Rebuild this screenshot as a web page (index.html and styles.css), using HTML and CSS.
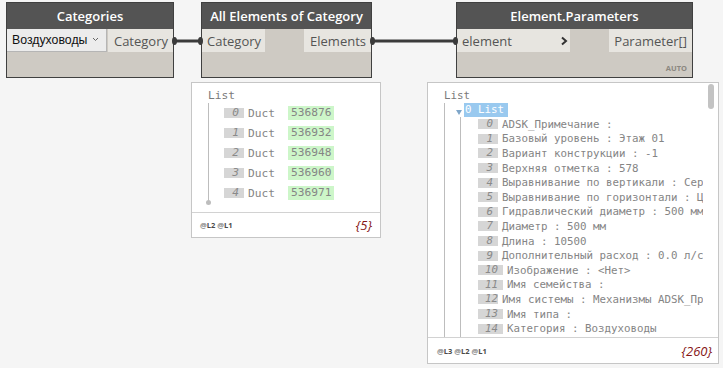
FILE: index.html
```html
<!DOCTYPE html>
<html lang="ru">
<head>
  <meta charset="UTF-8" />
  <title>Dynamo – Element.Parameters</title>
  <link rel="stylesheet" href="styles.css">
</head>
<body>
  <div class="canvas">

    <!-- Categories -->
    <div class="node node-categories">
      <div class="node-header">Categories</div>
      <div class="node-ports">
        <div class="dropdown">
          <span>Воздуховоды</span>
          <svg class="dropdown-arrow" width="7" height="5" viewBox="0 0 7 5"><polyline points="1,1 3.5,3.5 6,1" fill="none" stroke="#666" stroke-width="1"/></svg>
        </div>
        <div class="port port-out port-cat-out">Category</div>
      </div>
      <div class="node-body"></div>
    </div>

    <!-- All Elements of Category -->
    <div class="node node-elements">
      <div class="node-header">All Elements of Category</div>
      <div class="node-ports">
        <div class="port port-in port-cat-in">Category</div>
        <div class="port port-out port-el-out">Elements</div>
      </div>
      <div class="node-body"></div>
    </div>

    <!-- Element.Parameters -->
    <div class="node node-params">
      <div class="node-header">Element.Parameters</div>
      <div class="node-ports">
        <div class="port port-in port-el-in">
          <span>element</span>
          <svg class="lacing" width="8" height="10" viewBox="0 0 8 10"><polyline points="2,1.5 6,5 2,8.5" fill="none" stroke="#333" stroke-width="2"/></svg>
        </div>
        <div class="port port-out port-par-out">Parameter[]</div>
      </div>
      <div class="node-body node-body-auto"><span class="auto">AUTO</span></div>
    </div>

    <!-- wires -->
    <svg class="wires" width="723" height="368" viewBox="0 0 723 368">
      <line x1="174" y1="41" x2="200" y2="41" stroke="#3b3b3b" stroke-width="3"/>
      <line x1="372" y1="41" x2="455" y2="41" stroke="#3b3b3b" stroke-width="3"/>
      <ellipse cx="174.5" cy="41" rx="2.5" ry="4" fill="#3b3b3b"/>
      <ellipse cx="200.5" cy="41" rx="2.5" ry="4" fill="#3b3b3b"/>
      <ellipse cx="372.5" cy="41" rx="2.5" ry="4" fill="#3b3b3b"/>
      <ellipse cx="455.5" cy="41" rx="2.5" ry="4" fill="#3b3b3b"/>
    </svg>

    <!-- preview of All Elements of Category -->
    <div class="preview preview-elements">
      <div class="preview-body">
        <div class="list-label">List</div>
        <div class="list-level list-level-dot">
          <div class="item item-tall"><span class="idx">0</span><span>Duct</span><span class="elem-id">536876</span></div>
          <div class="item item-tall"><span class="idx">1</span><span>Duct</span><span class="elem-id">536932</span></div>
          <div class="item item-tall"><span class="idx">2</span><span>Duct</span><span class="elem-id">536948</span></div>
          <div class="item item-tall"><span class="idx">3</span><span>Duct</span><span class="elem-id">536960</span></div>
          <div class="item item-tall"><span class="idx">4</span><span>Duct</span><span class="elem-id">536971</span></div>
        </div>
      </div>
      <div class="preview-footer footer-elements">
        <span class="levels"><b>@</b>L2 <b>@</b>L1</span>
        <span class="count">{5}</span>
      </div>
    </div>

    <!-- preview of Element.Parameters -->
    <div class="preview preview-params">
      <div class="preview-row">
        <div class="preview-body">
          <div class="list-label">List</div>
          <div class="list-level">
            <div class="sublist-head">
              <span class="caret"></span>
              <span class="sublist-name">0 List</span>
            </div>
            <div class="list-level sub-level">
              <div class="item"><span class="idx">0</span><span>ADSK_Примечание :</span></div>
              <div class="item"><span class="idx">1</span><span>Базовый уровень : Этаж 01</span></div>
              <div class="item"><span class="idx">2</span><span>Вариант конструкции : -1</span></div>
              <div class="item"><span class="idx">3</span><span>Верхняя отметка : 578</span></div>
              <div class="item"><span class="idx">4</span><span>Выравнивание по вертикали : Середина</span></div>
              <div class="item"><span class="idx">5</span><span>Выравнивание по горизонтали : Центр</span></div>
              <div class="item"><span class="idx">6</span><span>Гидравлический диаметр : 500 мм</span></div>
              <div class="item"><span class="idx">7</span><span>Диаметр : 500 мм</span></div>
              <div class="item"><span class="idx">8</span><span>Длина : 10500</span></div>
              <div class="item"><span class="idx">9</span><span>Дополнительный расход : 0.0 л/с</span></div>
              <div class="item"><span class="idx">10</span><span>Изображение : &lt;Нет&gt;</span></div>
              <div class="item"><span class="idx">11</span><span>Имя семейства :</span></div>
              <div class="item"><span class="idx">12</span><span>Имя системы : Механизмы ADSK_Приток</span></div>
              <div class="item"><span class="idx">13</span><span>Имя типа :</span></div>
              <div class="item"><span class="idx">14</span><span>Категория : Воздуховоды</span></div>
            </div>
          </div>
        </div>
        <div class="scrollbar"><div class="scroll-thumb"></div></div>
      </div>
      <div class="preview-footer footer-params">
        <span class="levels"><b>@</b>L3 <b>@</b>L2 <b>@</b>L1</span>
        <span class="count">{260}</span>
      </div>
    </div>

  </div>
</body>
</html>
```

FILE: styles.css
```css
* {
  margin: 0;
  padding: 0;
  box-sizing: border-box;
}

body {
  background: #f5f5f5;
  font-family: 'Open Sans', sans-serif;
}

.canvas {
  position: relative;
  width: 723px;
  height: 368px;
  overflow: hidden;
}

/* nodes */
.node {
  position: absolute;
  top: 2px;
  height: 76px;
  display: flex;
  flex-direction: column;
  border: 1px solid #404040;
  background: #cecac3;
}

.node-categories { left: 6px; width: 168px; }
.node-elements { left: 201px; width: 171px; }
.node-params { left: 456px; width: 237px; }

.node-header {
  height: 26px;
  background: #545454;
  color: #ffffff;
  font-size: 13px;
  font-weight: 600;
  display: flex;
  align-items: center;
  justify-content: center;
}

.node-ports {
  height: 23px;
  display: flex;
  justify-content: space-between;
}

.port {
  background: #e7e5e0;
  color: #555555;
  font-size: 13px;
  display: flex;
  align-items: center;
}

.port-in { padding-left: 5px; }
.port-out { padding-right: 5px; justify-content: flex-end; }

.port-cat-out { width: 65px; }
.port-cat-in { width: 63px; }
.port-el-out { width: 67px; }
.port-el-in { width: 113px; justify-content: space-between; padding-right: 2px; }
.port-par-out { width: 83px; }

.lacing { display: block; }

.dropdown {
  width: 100px;
  background: #ececec;
  border-right: 1px solid #b5b5b5;
  border-bottom: 1px solid #b5b5b5;
  color: #111111;
  font-family: 'Liberation Sans', Arial, sans-serif;
  font-size: 12.3px;
  display: flex;
  align-items: center;
  justify-content: space-between;
  padding: 0 7px 0 5px;
}

.dropdown-arrow { display: block; margin-top: -2px; }

.node-body { flex: 1; }

.node-body-auto {
  display: flex;
  justify-content: flex-end;
  align-items: flex-end;
  padding: 0 5px 4px 0;
}

.auto {
  font-size: 7.5px;
  font-weight: 700;
  color: #8b8780;
}

.wires {
  position: absolute;
  left: 0;
  top: 0;
}

/* preview bubbles */
.preview {
  position: absolute;
  top: 82px;
  background: #ffffff;
  border: 1px solid #c6c6c6;
  display: flex;
  flex-direction: column;
  font-family: 'DejaVu Sans Mono', monospace;
  font-size: 10.8px;
  color: #858585;
}

.preview-elements { left: 191px; width: 190px; height: 156px; }
.preview-params { left: 427px; width: 292px; height: 282px; }

.preview-row {
  flex: 1;
  display: flex;
  overflow: hidden;
}

.preview-body {
  flex: 1;
  overflow: hidden;
  padding: 6px 0 0 16px;
  white-space: nowrap;
}

.preview-elements .preview-body { flex: none; height: 129px; font-size: 11.2px; }

.list-label {
  height: 14px;
  line-height: 14px;
  color: #7a7a7a;
}

.list-level {
  border-left: 1px solid #bdbdbd;
  position: relative;
}

.list-level-dot {
  padding-left: 15px;
  height: 99px;
}

.list-level-dot::after {
  content: "";
  position: absolute;
  left: -3px;
  bottom: -3px;
  width: 5px;
  height: 5px;
  border-radius: 50%;
  background: #bdbdbd;
}

.sublist-head {
  height: 14px;
  display: flex;
  align-items: center;
  padding-left: 11px;
}

.caret {
  width: 0;
  height: 0;
  border-left: 3.5px solid transparent;
  border-right: 3.5px solid transparent;
  border-top: 5px solid #7fa6c9;
  margin-top: 5px;
}

.sublist-name {
  margin-left: 2px;
  background: #99c9ef;
  color: #ffffff;
  line-height: 14px;
  padding: 0 4px 0 1px;
}

.sub-level {
  margin-left: 15px;
  padding-left: 17px;
  height: 230px;
}

.item {
  height: 14.6px;
  display: flex;
  align-items: center;
}

.item-tall { height: 20px; }

.idx {
  min-width: 20px;
  height: 10px;
  line-height: 10px;
  padding: 0 5px 0 7px;
  margin-right: 4px;
  background: #d6d6d6;
  color: #8a8a8a;
  font-style: italic;
  text-align: right;
}

.elem-id {
  margin-left: 13px;
  background: #cdf6c9;
  line-height: 14px;
  padding: 0 3px;
}

.scrollbar {
  width: 15px;
  position: relative;
}

.scroll-thumb {
  position: absolute;
  left: 5px;
  top: 1px;
  width: 6px;
  height: 25px;
  border-radius: 3px;
  background: #c3c3c3;
}

.preview-footer {
  height: 26px;
  border-top: 1px solid #d2d2d2;
  display: flex;
  align-items: center;
  justify-content: space-between;
  font-family: 'Open Sans', sans-serif;
}

.footer-elements { padding: 0 8px 0 8px; }
.footer-params { padding: 0 6px 0 9px; }

.levels {
  font-size: 7.5px;
  font-weight: 700;
  color: #4a4a4a;
}

.levels b { color: #9a9a9a; }

.count {
  font-size: 13px;
  font-style: italic;
  color: #861515;
}
```
